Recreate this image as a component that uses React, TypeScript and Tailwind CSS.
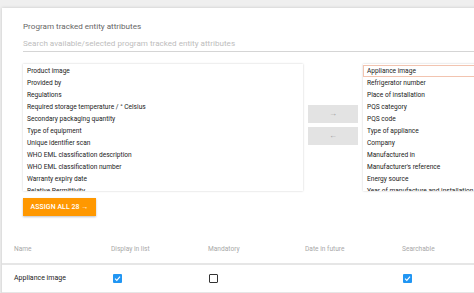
import React from "react";

const leftItems = [
  "Product image",
  "Provided by",
  "Regulations",
  "Required storage temperature / ° Celsius",
  "Secondary packaging quantity",
  "Type of equipment",
  "Unique identifier scan",
  "WHO EML classification description",
  "WHO EML classification number",
  "Warranty expiry date",
  "Relative Permittivity",
];

const rightItems = [
  "Appliance image",
  "Refrigerator number",
  "Place of installation",
  "PQS category",
  "PQS code",
  "Type of appliance",
  "Company",
  "Manufactured in",
  "Manufacturer's reference",
  "Energy source",
  "Year of manufacture and installation",
];

function Checked() {
  return (
    <div className="w-[9px] h-[9px] rounded-[1px] bg-[#2196f3] flex items-center justify-center">
      <svg width="7" height="7" viewBox="0 0 10 10">
        <path d="M1.5 5.2 L4 7.6 L8.6 2.4" fill="none" stroke="white" strokeWidth="1.6" />
      </svg>
    </div>
  );
}

function Unchecked() {
  return <div className="w-[9px] h-[9px] rounded-[1px] border-[1.5px] border-[#333]" />;
}

export default function App() {
  return (
    <div
      className="w-[474px] h-[293px] overflow-hidden bg-[#efefef] pt-[8px] pl-[2px]"
      style={{ fontFamily: "Roboto, 'Liberation Sans', sans-serif" }}
    >
      <div className="bg-white h-[300px] w-[660px] shadow-[0_0_3px_rgba(0,0,0,0.18)] pt-[13px]">
        <div className="pl-[21px]">
          <div className="text-[8.1px] leading-[10px] text-[#666]">Program tracked entity attributes</div>
          <div className="mt-[7px] text-[8.1px] leading-[11px] text-[#bdbdbd] border-b border-[#d5d5d5] pb-[2px]">
            Search available/selected program tracked entity attributes
          </div>
          <div className="flex mt-[12px]">
            <div className="w-[280px] shrink-0 h-[127px] overflow-hidden shadow-[0_0_2px_rgba(0,0,0,0.2)] pt-[1px]">
              {leftItems.map((t) => (
                <div key={t} className="h-[12px] leading-[12px] pl-[4px] text-[6.6px] text-[#222] whitespace-nowrap">
                  {t}
                </div>
              ))}
            </div>
            <div className="w-[60px] shrink-0 flex flex-col items-center justify-center gap-[4px] pb-[6px]">
              <div className="w-[50px] h-[18px] bg-[#e3e3e3] flex items-center justify-center text-[8px] text-[#a0a0a0]">
                →
              </div>
              <div className="w-[50px] h-[18px] bg-[#e3e3e3] flex items-center justify-center text-[8px] text-[#a0a0a0]">
                ←
              </div>
            </div>
            <div className="w-[280px] shrink-0 h-[127px] overflow-hidden shadow-[0_0_2px_rgba(0,0,0,0.2)] pt-[1px]">
              {rightItems.map((t, i) => (
                <div
                  key={t}
                  className={
                    i === 0
                      ? "h-[12px] leading-[10px] pl-[3px] text-[6.6px] text-[#222] whitespace-nowrap border border-[#f2c4b0]"
                      : "h-[12px] leading-[12px] pl-[4px] text-[6.6px] text-[#222] whitespace-nowrap"
                  }
                >
                  {t}
                </div>
              ))}
            </div>
          </div>
          <div className="mt-[7px] w-[73px] h-[18px] bg-[#ff9800] shadow-[0_1px_2px_rgba(0,0,0,0.25)] flex items-center justify-center text-white text-[6.9px] font-medium tracking-[0.1px]">
            ASSIGN ALL 28 →
          </div>
        </div>
        <div className="mt-[20px]">
          <div className="flex pl-[12px] h-[29px] items-center border-b-2 border-[#e6e6e6] text-[6.6px] text-[#a8a8a8]">
            <div className="w-[97px] shrink-0">Name</div>
            <div className="w-[97px] shrink-0">Display in list</div>
            <div className="w-[97px] shrink-0">Mandatory</div>
            <div className="w-[97px] shrink-0">Date in future</div>
            <div className="w-[97px] shrink-0">Searchable</div>
          </div>
          <div className="flex pl-[12px] h-[29px] items-center border-b-2 border-[#e6e6e6] text-[7px] text-[#222]">
            <div className="w-[97px] shrink-0">Appliance image</div>
            <div className="w-[97px] shrink-0 pl-[2px]">
              <Checked />
            </div>
            <div className="w-[97px] shrink-0 pl-[1px]">
              <Unchecked />
            </div>
            <div className="w-[97px] shrink-0" />
            <div className="w-[97px] shrink-0 pl-[1px]">
              <Checked />
            </div>
          </div>
        </div>
      </div>
    </div>
  );
}
